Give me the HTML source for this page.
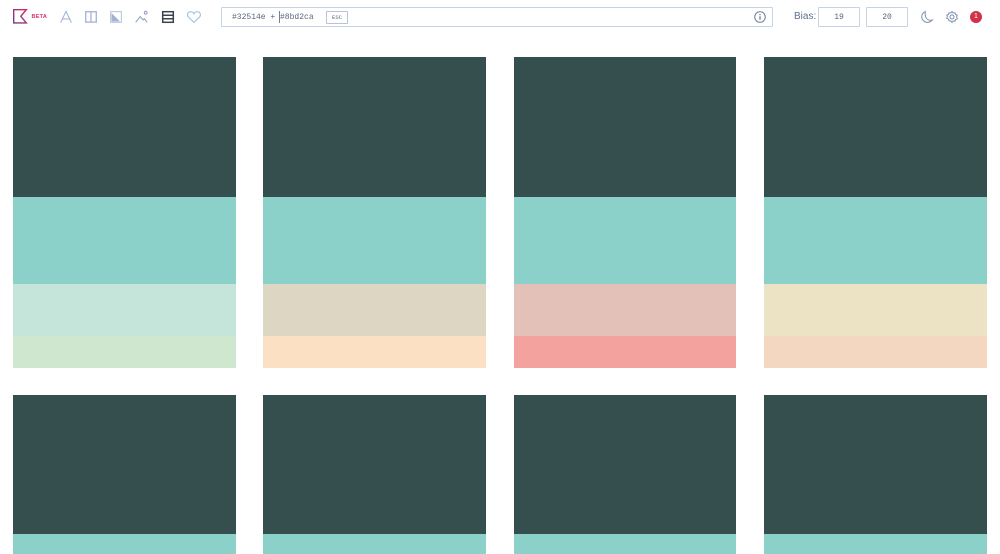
<!DOCTYPE html>
<html>
<head>
<meta charset="utf-8">
<style>
html,body{margin:0;padding:0;background:#fff;overflow:hidden;}
body{width:1000px;height:554px;position:relative;overflow:hidden;font-family:"Liberation Sans",sans-serif;}
.c{position:absolute;}
.c div{position:absolute;left:0;right:0;}
.a{top:0;height:140px;background:#344f4e;}
.b{top:140px;height:87px;background:#8bd1ca;}
.d{top:227px;height:52px;}
.e{top:279px;height:32px;}
.r2 .a{height:139px;}
.r2 .b{top:139px;height:20px;}
.w1{left:13px;width:223px;}
.w2{left:263px;width:223px;}
.w3{left:514px;width:222px;}
.w4{left:764px;width:223px;}
.box{position:absolute;box-sizing:border-box;border:1px solid #c5d3e6;background:#fff;border-radius:1px;}
.m{font-family:"Liberation Mono",monospace;color:#55677f;}
svg{position:absolute;overflow:visible;}
</style>
</head>
<body>
<svg style="left:13px;top:9px" width="15" height="15" viewBox="0 0 15 15" fill="none">
  <defs><linearGradient id="g" x1="0" y1="1" x2="1" y2="0"><stop offset="0" stop-color="#6b3f8c"/><stop offset="1" stop-color="#e0245e"/></linearGradient></defs>
  <path d="M.7.7H13.300L7.800 7.300 13.300 13.900H.7Z" stroke="url(#g)" stroke-width="1.400"/>
</svg>
<div style="position:absolute;left:31.500px;top:14px;font-size:5.500px;font-weight:bold;color:#e0305f;letter-spacing:.25px;line-height:7px">BETA</div>

<svg style="left:60px;top:11px" width="12" height="12" viewBox="0 0 12 12" fill="none" stroke="#9fb0d4" stroke-width="1"><path d="M.6 11.600 6 .4l5.400 11.200M2.300 8h7.400"/></svg>
<svg style="left:85px;top:11px" width="12" height="12" viewBox="0 0 12 12" fill="none" stroke="#a9b8d8" stroke-width="1.400"><rect x=".7" y=".7" width="10.600" height="10.400"/><path d="M6 .7v10.400"/></svg>
<svg style="left:110px;top:11px" width="12" height="12" viewBox="0 0 12 12" fill="none"><rect x=".6" y=".6" width="10.800" height="10.800" stroke="#bcc7df" stroke-width="1.100"/><path d="M1.500 2v8.500h8.500Z" fill="#a3b2d2"/></svg>
<svg style="left:135px;top:10px" width="13" height="13" viewBox="0 0 13 13" fill="none" stroke="#8f9fc0" stroke-width="1"><path d="M.7 12.300 5.200 6.500 8.200 10l1.200-1.300 2.600 3.600"/><circle cx="10.700" cy="2.700" r="1.400"/></svg>
<svg style="left:162px;top:11px" width="12" height="12" viewBox="0 0 12 12" fill="none" stroke="#3a424e" stroke-width="1.500"><rect x=".7" y=".7" width="10.600" height="10.600"/><path d="M.7 4.300h10.600M.7 7.700h10.600"/></svg>
<svg style="left:187px;top:11px" width="14" height="12" viewBox="0 0 14 12" fill="none" stroke="#a9c4e2" stroke-width="1.200"><path d="M7 11.400 1.600 6.200C-.6 3.800 1 .7 3.700.7 5.100.7 6.300 1.400 7 2.700 7.700 1.400 8.900.7 10.300.7c2.700 0 4.300 3.100 2.100 5.500Z"/></svg>

<div class="box" style="left:221px;top:7px;width:552px;height:20px"></div>
<div class="m" style="position:absolute;left:232px;top:13px;font-size:8px;line-height:10px;white-space:pre">#32514e + #8bd2ca</div>
<div style="position:absolute;left:279px;top:11px;width:1px;height:12px;background:#6f80a0"></div>
<div class="box m" style="left:326px;top:11px;width:22px;height:13px;font-size:5.500px;line-height:11px;text-align:center;border-color:#b5c4da">ESC</div>
<svg style="left:754px;top:11px" width="12" height="12" viewBox="0 0 12 12" fill="none" stroke="#6f7f96" stroke-width="1"><circle cx="6" cy="6" r="5.300"/><path d="M6 5.200v3.600M6 3v1.200" stroke-width="1.300"/></svg>

<div style="position:absolute;left:794px;top:11px;font-size:10px;line-height:12px;color:#5f6f8c">Bias:</div>
<div class="box m" style="left:818px;top:7px;width:42px;height:20px;font-size:8px;line-height:20px;text-align:center">19</div>
<div class="box m" style="left:866px;top:7px;width:42px;height:20px;font-size:8px;line-height:20px;text-align:center">20</div>

<svg style="left:921px;top:11px" width="12" height="12" viewBox="0 0 12 12" fill="none" stroke="#8a9ab0" stroke-width="1.100"><path d="M4.300.6C1.800 1.700.6 3.800.7 6c.3 3 2.800 5.400 5.600 5.400 1.900 0 3.400-.7 4.900-2.200-3.500.5-5.900-1.100-6.700-3.700C4 3.800 4 2.200 4.300.6Z"/></svg>
<svg style="left:946px;top:11px" width="12" height="12" viewBox="0 0 12 12" fill="none" stroke="#7c90aa" stroke-width="1"><path d="M6 .6 7.200 2l1.800-.2.500 1.700 1.700.7-.5 1.800.5 1.800-1.700.7-.5 1.700L7.200 10 6 11.400 4.800 10 3 9.800 2.500 8.100.8 7.400 1.300 5.600.8 4.200 2.500 3.500 3 1.800 4.800 2Z"/><circle cx="6" cy="6" r="2"/></svg>
<div style="position:absolute;left:970px;top:11px;width:12px;height:12px;border-radius:50%;background:#d0324a;color:#fff;font-size:7px;line-height:12px;text-align:center">1</div>

<div class="c w1" style="top:57px;height:311px"><div class="a"></div><div class="b"></div><div class="d" style="background:#c5e5da"></div><div class="e" style="background:#d0e7cf"></div></div>
<div class="c w2" style="top:57px;height:311px"><div class="a"></div><div class="b"></div><div class="d" style="background:#ddd6c3"></div><div class="e" style="background:#fce0c3"></div></div>
<div class="c w3" style="top:57px;height:311px"><div class="a"></div><div class="b"></div><div class="d" style="background:#e3c1b8"></div><div class="e" style="background:#f3a29e"></div></div>
<div class="c w4" style="top:57px;height:311px"><div class="a"></div><div class="b"></div><div class="d" style="background:#ece3c4"></div><div class="e" style="background:#f3d7c1"></div></div>

<div class="c w1 r2" style="top:395px;height:159px"><div class="a"></div><div class="b"></div></div>
<div class="c w2 r2" style="top:395px;height:159px"><div class="a"></div><div class="b"></div></div>
<div class="c w3 r2" style="top:395px;height:159px"><div class="a"></div><div class="b"></div></div>
<div class="c w4 r2" style="top:395px;height:159px"><div class="a"></div><div class="b"></div></div>
</body>
</html>
